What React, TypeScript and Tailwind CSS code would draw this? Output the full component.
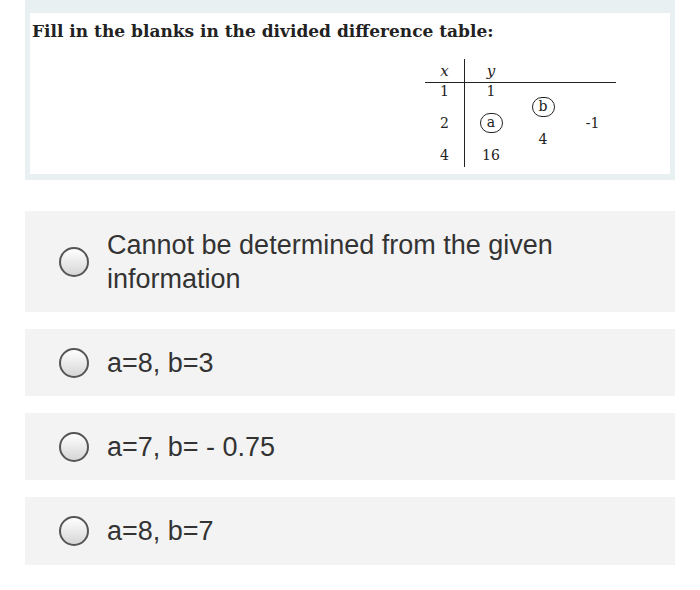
const OPTIONS = [
  { label: "Cannot be determined from the given information", height: "h-[101px]" },
  { label: "a=8, b=3", height: "h-[67px]" },
  { label: "a=7, b= - 0.75", height: "h-[67px]" },
  { label: "a=8, b=7", height: "h-[68px]" },
];

function Circled({ ch }: { ch: string }) {
  return (
    <span className="inline-flex items-center justify-center w-[23px] h-[20px] rounded-full border border-[#222] text-[14px] leading-none pb-[2px]">
      {ch}
    </span>
  );
}

function Radio() {
  return (
    <span className="flex-shrink-0 w-[30px] h-[30px] rounded-full border-2 border-[#555] bg-gradient-to-b from-white to-[#d6d6d6]" />
  );
}

export default function App() {
  return (
    <div className="w-[700px] h-[590px] bg-white font-['Liberation_Sans',Arial,sans-serif]">
      {/* Question */}
      <div className="ml-[25px] w-[650px] bg-[#e9f0f2] pt-[13px] px-[5px] pb-[6px]">
        <div className="bg-white h-[161px] pt-[6px] pl-[2px] font-['DejaVu_Serif',serif] text-[#222]">
          <p className="text-[17px] font-semibold">
            Fill in the blanks in the divided difference table:
          </p>
          <div className="ml-[393px] mt-[14px] grid grid-cols-[40px_52px_52px_47px] grid-rows-[24px_16px_16px_16px_16px_20px] text-[14px] leading-none">
            <div className="border-r border-b border-[#222] flex items-end justify-center pb-[3px] italic pt-[5px] text-[15px]">x</div>
            <div className="border-b border-[#222] flex items-end justify-center pb-[3px] italic text-[15px]">y</div>
            <div className="border-b border-[#222]" />
            <div className="border-b border-[#222]" />

            <div className="border-r border-[#222] flex items-center justify-center">1</div>
            <div className="flex items-center justify-center">1</div>
            <div />
            <div />

            <div className="border-r border-[#222]" />
            <div />
            <div className="flex items-center justify-center"><Circled ch="b" /></div>
            <div />

            <div className="border-r border-[#222] flex items-center justify-center">2</div>
            <div className="flex items-center justify-center"><Circled ch="a" /></div>
            <div />
            <div className="flex items-center justify-center">-1</div>

            <div className="border-r border-[#222]" />
            <div />
            <div className="flex items-center justify-center">4</div>
            <div />

            <div className="border-r border-[#222] flex items-start justify-center pt-[1px]">4</div>
            <div className="flex items-start justify-center pt-[1px]">16</div>
            <div />
            <div />
          </div>
        </div>
      </div>

      {/* Options */}
      <div className="mt-[31px] ml-[25px] w-[650px] flex flex-col gap-[17px]">
        {OPTIONS.map((opt) => (
          <div key={opt.label} className={`${opt.height} bg-[#f3f3f3] flex items-center pl-[34px] pr-[90px]`}>
            <Radio />
            <span className="ml-[18px] text-[27px] leading-[34px] text-[#333]">{opt.label}</span>
          </div>
        ))}
      </div>
    </div>
  );
}
